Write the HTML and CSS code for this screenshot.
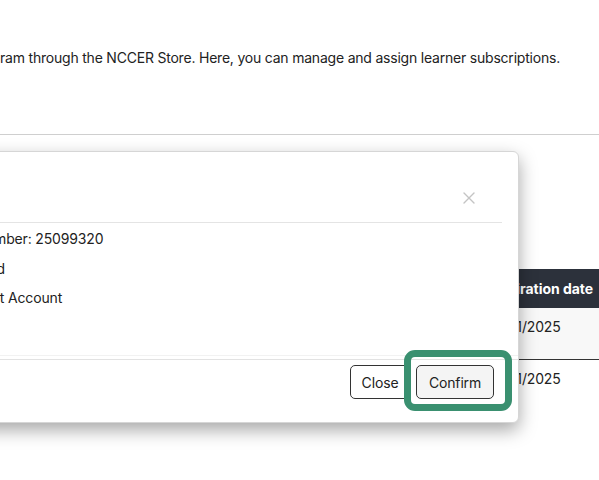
FILE: index.html
```html
<!DOCTYPE html>
<html lang="en">
<head>
<meta charset="utf-8">
<title>Subscriptions</title>
<link rel="stylesheet" href="styles.css">
</head>
<body>
<div class="page">
  <div class="intro">
    <p>Subscriptions purchased for your program through the NCCER Store. Here, you can manage and assign learner subscriptions.</p>
  </div>
  <hr class="rule">
  <div class="table-wrap">
    <table class="subs">
      <thead>
        <tr><th class="c1">Name</th><th class="c2">Product</th><th class="c3">Purchase date</th><th class="c4">Expiration date</th></tr>
      </thead>
      <tbody>
        <tr class="odd"><td>Core Curriculum</td><td>Digital</td><td>01/01/2025</td><td>12/31/2025</td></tr>
        <tr><td>Electrical Level 1</td><td>Digital</td><td>01/01/2025</td><td>12/31/2025</td></tr>
      </tbody>
    </table>
  </div>
</div>

<div class="modal">
  <div class="modal-header">
    <span class="close-x" aria-label="Close">
      <svg width="12" height="12" viewBox="0 0 12 12"><path d="M1 1L11 11M11 1L1 11" stroke="#c4c4c4" stroke-width="1.4" fill="none" stroke-linecap="round"/></svg>
    </span>
  </div>
  <div class="modal-body">
    <p>Order number: 25099320</p>
    <p>Type: Paid</p>
    <p>Via: Credit Account</p>
  </div>
  <div class="modal-footer">
    <button class="btn btn-close">Close</button>
    <span class="confirm-wrap">
      <button class="btn btn-confirm">Confirm</button>
      <span class="highlight"></span>
    </span>
  </div>
</div>
</body>
</html>
```
FILE: styles.css
```css
html, body {
  margin: 0;
  padding: 0;
  background: #ffffff;
  overflow: hidden;
}
body {
  width: 599px;
  height: 480px;
  position: relative;
  font-family: Inter, "Noto Sans", Arial, sans-serif;
  font-size: 14px;
  letter-spacing: -0.15px;
  color: #222;
}
.page {
  padding-top: 48px;
}
.intro {
  display: flex;
  justify-content: flex-end;
  padding-right: 39px;
  white-space: nowrap;
  letter-spacing: -0.21px;
}
.intro p {
  margin: 0;
  line-height: 20px;
}
.rule {
  margin: 66px 0 0 0;
  border: 0;
  border-top: 1px solid #cfcfcf;
  height: 0;
}
.table-wrap {
  display: flex;
  justify-content: flex-end;
  margin-top: 134px;
  margin-right: -6px;
}
.subs {
  border-collapse: collapse;
  white-space: nowrap;
}
.subs th {
  background: #2c313b;
  color: #fff;
  font-weight: 700;
  text-align: left;
  height: 39px;
  padding: 0 12px;
}
.subs th.c4 {
  letter-spacing: -0.05px;
}
.subs td {
  vertical-align: top;
  padding: 9px 12px 0 12px;
  height: 42px;
  line-height: 20px;
}
.subs tr.odd td {
  background: #f8f8f8;
  border-bottom: 1px solid #333;
}
.subs td:last-child {
  padding-left: 10px;
}
.modal {
  position: absolute;
  left: -80px;
  top: 151px;
  width: 597px;
  height: 270px;
  background: #fff;
  border: 1px solid #d6d6d6;
  border-radius: 6px;
  box-shadow: 0 7px 18px rgba(0, 0, 0, 0.35);
  display: flex;
  flex-direction: column;
}
.modal-header {
  height: 71px;
  margin-right: 16px;
  border-bottom: 1px solid #e4e4e4;
  display: flex;
  justify-content: flex-end;
  align-items: flex-start;
  padding: 40px 27px 0 0;
  box-sizing: border-box;
}
.close-x {
  display: block;
  width: 12px;
  height: 12px;
}
.close-x svg { display: block; }
.modal-body {
  padding: 1px 16px 0 16px;
  height: 133px;
  box-sizing: border-box;
  border-bottom: 1px solid #f2f2f2;
}
.modal-body p {
  margin: 0;
  line-height: 29.5px;
}
.modal-footer {
  border-top: 1px solid #e2e2e2;
  margin-top: 3px;
  display: flex;
  justify-content: flex-end;
  align-items: flex-start;
  gap: 6px;
  padding: 5px 24px 0 0;
}
.btn {
  font-family: Inter, "Noto Sans", Arial, sans-serif;
  font-size: 14px;
  letter-spacing: -0.15px;
  color: #222;
  background: #fff;
  border: 1px solid #333;
  border-radius: 5px;
  height: 34px;
  padding: 0 12px;
  cursor: pointer;
}
.btn-close {
  width: 60px;
  padding: 0;
}
.btn-confirm {
  background: #f4f4f4;
  width: 78px;
  padding: 0;
}
.confirm-wrap {
  position: relative;
  display: block;
}
.confirm-wrap .btn { display: block; }
.highlight {
  position: absolute;
  left: -12px;
  right: -18px;
  top: -15px;
  bottom: -12px;
  border: 7px solid #3a9070;
  border-radius: 11px;
  pointer-events: none;
}
```
